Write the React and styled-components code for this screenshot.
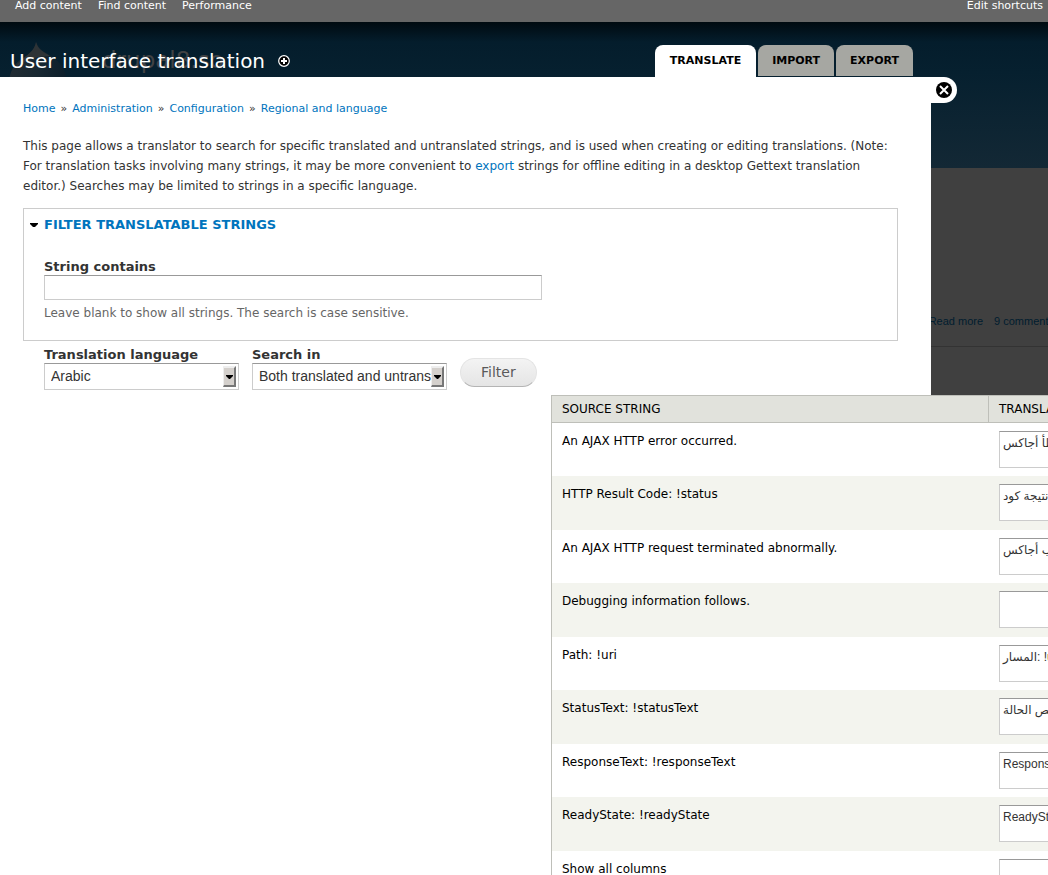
import React, { useState } from 'react';
import styled, { createGlobalStyle } from 'styled-components';

const GlobalStyle = createGlobalStyle`
  * {
    box-sizing: border-box;
  }

  body {
    margin: 0;
    background: #404040;
    color: #333;
    font-family: 'DejaVu Sans', sans-serif;
    font-size: 12px;
    line-height: 20px;
  }

  a {
    color: #0074bd;
    text-decoration: none;
  }

  a:hover {
    text-decoration: underline;
  }
`;

const Page = styled.div`
  display: flex;
  flex-direction: column;
  height: 100vh;
  overflow: hidden;
`;

// Shortcut bar
const ShortcutBar = styled.nav`
  display: flex;
  flex: none;
  gap: 16px;
  padding: 0 5px 11px 15px;
  background: #666;
  font-size: 11px;
  line-height: 11px;

  a {
    color: #fff;
  }

  a:last-child {
    margin-left: auto;
  }
`;

// The site and the overlay share one grid cell
const Stage = styled.div`
  display: grid;
  grid-template-columns: minmax(0, 1fr);
  flex: 1;
  min-height: 0;
  overflow: hidden;
`;

const Site = styled.div`
  grid-area: 1 / 1;
`;

const SiteHeader = styled.header`
  display: flex;
  align-items: flex-start;
  gap: 34px;
  height: 146px;
  padding: 20px 8px;
  background: linear-gradient(#000a10 0, #041d2c 20px, #06202f 50px, #132835 100%);
`;

const SiteName = styled.span`
  padding-top: 5px;
  color: #414244;
  font-size: 23px;
  line-height: 26px;
`;

const SiteLinks = styled.div`
  display: flex;
  justify-content: flex-end;
  gap: 11px;
  height: 179px;
  padding-top: 143px;
  border-bottom: 1px solid #333;
  font-family: 'Liberation Sans', sans-serif;
  font-size: 11px;
  white-space: nowrap;

  a {
    color: #001d2f;
  }

  a:last-child {
    margin-right: -6px;
  }
`;

const Overlay = styled.div`
  grid-area: 1 / 1;
  display: grid;
  grid-template-columns: minmax(0, 1fr) 117px;
  grid-template-rows: auto 1fr;
`;

const OverlayTop = styled.div`
  display: flex;
  align-items: flex-end;
  justify-content: space-between;
  height: 55px;
  padding: 0 18px 0 10px;
`;

const TitleRow = styled.div`
  display: flex;
  align-items: center;
  gap: 13px;
  height: 32px;
`;

const Title = styled.h1`
  margin: 0;
  color: #fff;
  font-size: 20px;
  font-weight: normal;
  line-height: 32px;
`;

const IconButton = styled.button`
  display: flex;
  padding: 0;
  border: none;
  background: none;
  cursor: pointer;
`;

const Tabs = styled.nav`
  display: flex;
  gap: 2px;
`;

const Tab = styled.a`
  height: ${({ $active }) => ($active ? '32px' : '31px')};
  padding: 0 ${({ $active }) => ($active ? '15px' : '14px')};
  border-radius: 8px 8px 0 0;
  background: ${({ $active }) => ($active ? '#fff' : '#a6a7a2')};
  font-size: 11px;
  font-weight: bold;
  line-height: 32px;
  text-transform: uppercase;

  && {
    color: #000;
  }
`;

const Panel = styled.main`
  grid-row: 2;
  min-width: 0;
  padding: 22px 33px 0 23px;
  background: #fff;
`;

const CloseButton = styled(IconButton)`
  grid-row: 2;
  grid-column: 2;
  align-items: center;
  width: 26px;
  height: 26px;
  padding-left: 4px;
  border-radius: 0 13px 13px 0;
  background: #fff;
`;

const Breadcrumb = styled.nav`
  display: flex;
  gap: 5px;
  font-size: 11px;
`;

const Intro = styled.p`
  margin: 17px 0 12px;
`;

const Fieldset = styled.section`
  padding: 6px 20px 17px;
  border: 1px solid #ccc;
`;

const Legend = styled.h2`
  display: flex;
  align-items: center;
  gap: 6px;
  margin: 0 0 23px -14px;
  font-size: 13px;
  line-height: 20px;
  text-transform: uppercase;
`;

const Label = styled.label`
  display: block;
  font-size: 13px;
  font-weight: bold;
  line-height: 17px;
`;

const TextInput = styled.input`
  display: block;
  width: 498px;
  max-width: 100%;
  height: 25px;
  padding: 2px;
  border: 1px solid #ccc;
  border-top-color: #999;
`;

const Hint = styled.p`
  margin: 3px 0 0;
  color: #666;
`;

const FilterRow = styled.div`
  display: flex;
  gap: 13px;
  padding: 5px 21px;
`;

const Field = styled.div`
  width: 195px;
`;

const SelectBox = styled.div`
  display: grid;
  align-items: center;
`;

const Select = styled.select`
  grid-area: 1 / 1;
  width: 100%;
  height: 27px;
  padding: 0 15px 1px 6px;
  border: 1px solid #ccc;
  border-top-color: #999;
  border-radius: 0;
  background: #fff;
  color: #333;
  font-family: 'Liberation Sans', sans-serif;
  font-size: 14px;
  appearance: none;
`;

const SelectArrow = styled.span`
  grid-area: 1 / 1;
  justify-self: end;
  display: flex;
  align-items: center;
  justify-content: center;
  width: 13px;
  height: 21px;
  margin-right: 3px;
  border: 2px solid;
  border-color: #eee #777 #777 #eee;
  border-left-width: 1px;
  background: #d4d0cc;
  pointer-events: none;
`;

const FilterButton = styled.button`
  align-self: flex-end;
  height: 29px;
  margin-bottom: 3px;
  padding: 0 20px 2px;
  border: 1px solid #e4e4e4;
  border-bottom-color: #b4b4b4;
  border-radius: 15px;
  background: linear-gradient(#f3f3f3, #e5e5e5);
  color: #5a5a5a;
  font-family: inherit;
  font-size: 14px;
  cursor: pointer;
`;

const Table = styled.table`
  width: 900px;
  margin-left: 528px;
  border-collapse: separate;
  border-spacing: 0;
  border-left: 1px solid #bebfb9;
  background: #fff;
  color: #000;
  table-layout: fixed;
`;

const HeadCell = styled.th`
  width: ${({ $width }) => $width};
  height: 28px;
  padding: 0 10px;
  border: solid #bebfb9;
  border-width: 1px 1px 1px 0;
  background: #e1e2dc;
  font-weight: normal;
  text-align: left;
  text-transform: uppercase;
`;

const Row = styled.tr`
  height: 53px;

  &:nth-child(even) {
    height: 54px;
    background: #f3f4ee;
  }
`;

const Cell = styled.td`
  padding: 8px 10px;
  vertical-align: top;
`;

const Translation = styled.textarea`
  display: block;
  width: 100%;
  height: 37px;
  padding: 3px;
  border: 1px solid #ccc;
  border-top-color: #999;
  color: #333;
  font-family: 'Liberation Sans', 'DejaVu Sans', sans-serif;
  font-size: 12px;
  line-height: 16px;
  resize: none;
`;

const strings = [
  { source: 'An AJAX HTTP error occurred.', translation: 'خطأ أجاكس' },
  { source: 'HTTP Result Code: !status', translation: 'نتيجة كود' },
  { source: 'An AJAX HTTP request terminated abnormally.', translation: 'طلب أجاكس' },
  { source: 'Debugging information follows.', translation: '' },
  { source: 'Path: !uri', translation: 'المسار: !uri' },
  { source: 'StatusText: !statusText', translation: 'نص الحالة' },
  { source: 'ResponseText: !responseText', translation: 'ResponseText: !responseText' },
  { source: 'ReadyState: !readyState', translation: 'ReadyState: !readyState' },
  { source: 'Show all columns', translation: '' },
];

const SelectField = ({ id, label, options }) => (
  <Field>
    <Label htmlFor={id}>{label}</Label>
    <SelectBox>
      <Select id={id}>
        {options.map((option) => (
          <option key={option}>{option}</option>
        ))}
      </Select>
      <SelectArrow>
        <svg width="7" height="4" viewBox="0 0 7 4">
          <path d="M0 0h7v1L4 4H3L0 1z" fill="#000" />
        </svg>
      </SelectArrow>
    </SelectBox>
  </Field>
);

const Drop = () => (
  <svg width="60" height="70" viewBox="0 0 60 70">
    <defs>
      <linearGradient id="drop" x1="0" x2="1" y1="0" y2="0">
        <stop offset="0" stopColor="#222c33" />
        <stop offset="0.5" stopColor="#182832" />
        <stop offset="1" stopColor="#0c1e2b" />
      </linearGradient>
    </defs>
    <path
      d="M28 0C31 9 38 10 46 16C54 22 59 31 59 42C59 59 46 70 30 70S1 59 1 42C1 29 7 21 15 16C22 12 27 8 28 0Z"
      fill="url(#drop)"
    />
    <path d="M28 0C30 8 36 10 42 14C31 14 19 17 8 25C14 14 26 12 28 0Z" fill="#2e3336" />
  </svg>
);

const App = () => {
  const [open, setOpen] = useState(true);

  return (
    <Page>
      <GlobalStyle />
      <ShortcutBar>
        <a href="#add">Add content</a>
        <a href="#find">Find content</a>
        <a href="#performance">Performance</a>
        <a href="#edit">Edit shortcuts</a>
      </ShortcutBar>

      <Stage>
        <Site>
          <SiteHeader>
            <Drop />
            <SiteName>drupal8.so</SiteName>
          </SiteHeader>
          <SiteLinks>
            <a href="#more">Read more</a>
            <a href="#comments">9 comments</a>
          </SiteLinks>
        </Site>

        <Overlay>
          <OverlayTop>
            <TitleRow>
              <Title>User interface translation</Title>
              <IconButton aria-label="Add to shortcuts">
                <svg width="12" height="12" viewBox="0 0 12 12">
                  <circle cx="6" cy="6" r="5.3" fill="#000" stroke="#fff" strokeWidth="1.2" />
                  <path d="M6 3v6M3 6h6" stroke="#fff" strokeWidth="2" />
                </svg>
              </IconButton>
            </TitleRow>
            <Tabs>
              <Tab href="#translate" $active>Translate</Tab>
              <Tab href="#import">Import</Tab>
              <Tab href="#export">Export</Tab>
            </Tabs>
          </OverlayTop>

          <Panel>
            <Breadcrumb>
              <a href="#home">Home</a>
              <span>»</span>
              <a href="#admin">Administration</a>
              <span>»</span>
              <a href="#config">Configuration</a>
              <span>»</span>
              <a href="#regional">Regional and language</a>
            </Breadcrumb>
            <Intro>
              This page allows a translator to search for specific translated and untranslated
              strings, and is used when creating or editing translations. (Note: For translation
              tasks involving many strings, it may be more convenient to{' '}
              <a href="#export">export</a> strings for offline editing in a desktop Gettext
              translation editor.) Searches may be limited to strings in a specific language.
            </Intro>

            <Fieldset>
              <Legend>
                <svg width="8" height="5" viewBox="0 0 8 5">
                  <path d="M0 0h8v1L5 4H3L0 1z" fill="#000" />
                </svg>
                <a
                  href="#filter"
                  onClick={(e) => {
                    e.preventDefault();
                    setOpen(!open);
                  }}
                >
                  Filter translatable strings
                </a>
              </Legend>
              {open && (
                <>
                  <Label htmlFor="string">String contains</Label>
                  <TextInput id="string" type="text" />
                  <Hint>Leave blank to show all strings. The search is case sensitive.</Hint>
                </>
              )}
            </Fieldset>

            <FilterRow>
              <SelectField id="language" label="Translation language" options={['Arabic']} />
              <SelectField
                id="search-in"
                label="Search in"
                options={['Both translated and untranslated strings']}
              />
              <FilterButton>Filter</FilterButton>
            </FilterRow>

            <Table>
              <thead>
                <tr>
                  <HeadCell $width="437px">Source string</HeadCell>
                  <HeadCell>Translation for Arabic</HeadCell>
                </tr>
              </thead>
              <tbody>
                {strings.map(({ source, translation }) => (
                  <Row key={source}>
                    <Cell>{source}</Cell>
                    <Cell>
                      <Translation aria-label={source} defaultValue={translation} />
                    </Cell>
                  </Row>
                ))}
              </tbody>
            </Table>
          </Panel>

          <CloseButton aria-label="Close overlay">
            <svg width="18" height="18" viewBox="0 0 18 18">
              <circle cx="9" cy="9" r="8" fill="#000" />
              <path d="M5 5l8 8M13 5l-8 8" stroke="#fff" strokeWidth="2" />
            </svg>
          </CloseButton>
        </Overlay>
      </Stage>
    </Page>
  );
};

export default App;
